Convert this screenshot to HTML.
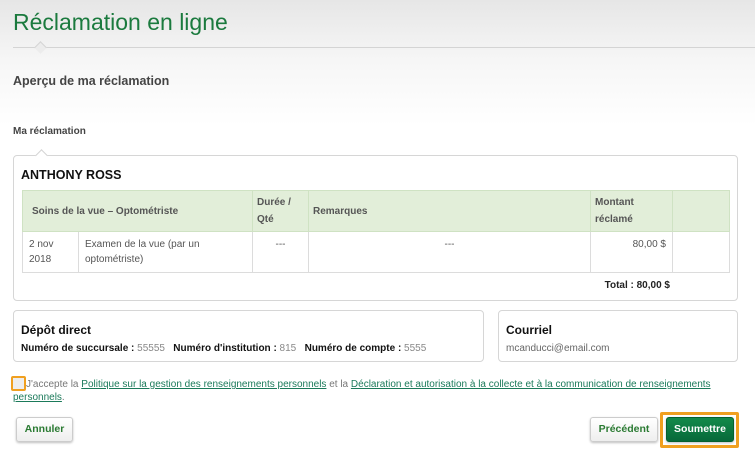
<!DOCTYPE html>
<html><head><meta charset="utf-8"><style>
*{box-sizing:border-box}
body{margin:0;width:755px;height:456px;overflow:hidden;font-family:"Liberation Sans",Arial,sans-serif;background:linear-gradient(#e6e6e6 0,#f6f6f6 60px,#fff 125px);position:relative;color:#222}
.a{position:absolute}
h1{position:absolute;left:13px;top:9px;margin:0;font-size:23px;font-weight:normal;color:#1b7a3e}
.hr{position:absolute;left:13px;right:0;top:47px;border-top:1px solid #d4d4d4}
.notch{position:absolute;width:9px;height:9px;border-left:1px solid #d4d4d4;border-top:1px solid #d4d4d4;transform:rotate(45deg);background:inherit}
.box{position:absolute;border:1px solid #d6d6d6;border-radius:4px;background:#fff}
table{border-collapse:collapse;position:absolute;left:22px;top:190px;width:707px;font-size:10px;table-layout:fixed}
td{border:1px solid #dcdcdc;vertical-align:top;padding:5px 6px;color:#555;line-height:15px}
th{background:#e2eed9;border:1px solid #cfe2c3;text-align:left;font-weight:bold;color:#555;padding:3px 4px;line-height:17px;font-size:10px;vertical-align:top}
.btn{position:absolute;height:25px;border:1px solid #ccc;border-radius:3px;background:linear-gradient(#fff,#eee);box-shadow:0 1px 2px rgba(0,0,0,.25);font-weight:bold;font-size:10.5px;color:#2a7a32;text-align:center;line-height:23px}
a{color:#1b7a5a;text-decoration:underline}
</style></head><body>
<h1>Réclamation en ligne</h1>
<div class="hr"></div>
<div class="notch" style="left:36px;top:43px;background:#ececec"></div>
<div class="a" style="left:13px;top:74px;font-size:12.5px;font-weight:bold;color:#444">Aperçu de ma réclamation</div>
<div class="a" style="left:13px;top:126px;font-size:10px;font-weight:bold;color:#444">Ma réclamation</div>
<div class="box" style="left:13px;top:155px;width:725px;height:146px"></div>
<div class="notch" style="left:37px;top:151px;background:#fff"></div>
<div class="a" style="left:21px;top:168px;font-size:12.5px;font-weight:bold;color:#111">ANTHONY ROSS</div>
<table>
<colgroup><col style="width:56px"><col style="width:174px"><col style="width:56px"><col style="width:282px"><col style="width:82px"><col style="width:57px"></colgroup>
<tr style="height:40px"><th colspan="2" style="padding-left:9px;vertical-align:middle">Soins de la vue – Optométriste</th><th>Durée /<br>Qté</th><th style="vertical-align:middle">Remarques</th><th>Montant<br>réclamé</th><th></th></tr>
<tr style="height:40px"><td>2 nov<br>2018</td><td>Examen de la vue (par un<br>optométriste)</td><td style="text-align:center">---</td><td style="text-align:center">---</td><td style="text-align:right">80,00 $</td><td></td></tr>
</table>
<div class="a" style="left:560px;top:280px;width:110px;text-align:right;font-size:10px;font-weight:bold">Total : 80,00 $</div>
<div class="box" style="left:13px;top:310px;width:471px;height:52px"></div>
<div class="a" style="left:21px;top:323px;font-size:12px;font-weight:bold;color:#111">Dépôt direct</div>
<div class="a" style="left:21px;top:343px;font-size:10px;color:#888"><b style="color:#111">Numéro de succursale :</b> 55555 &nbsp; <b style="color:#111">Numéro d'institution :</b> 815 &nbsp; <b style="color:#111">Numéro de compte :</b> 5555</div>
<div class="box" style="left:498px;top:310px;width:240px;height:52px"></div>
<div class="a" style="left:506px;top:323px;font-size:12px;font-weight:bold;color:#111">Courriel</div>
<div class="a" style="left:506px;top:343px;font-size:10px;color:#666">mcanducci@email.com</div>
<div class="a" style="left:11px;top:376px;width:15px;height:15px;border:2px solid #f0a020;border-radius:2px;background:#eee"></div>
<div class="a" style="left:13px;top:378px;width:720px;font-size:10px;color:#777;line-height:13px;text-indent:13px">J'accepte la <a>Politique sur la gestion des renseignements personnels</a> et la <a>Déclaration et autorisation à la collecte et à la communication de renseignements</a> <a>personnels</a>.</div>
<div class="btn" style="left:16px;top:417px;width:57px">Annuler</div>
<div class="btn" style="left:590px;top:417px;width:68px">Précédent</div>
<div class="a" style="left:660px;top:412px;width:79px;height:36px;border:3px solid #f0a020;border-radius:2px"></div>
<div class="btn" style="left:666px;top:417px;width:68px;background:linear-gradient(#138a4a,#07693a);color:#fff;border-color:#06602f">Soumettre</div>
</body></html>
